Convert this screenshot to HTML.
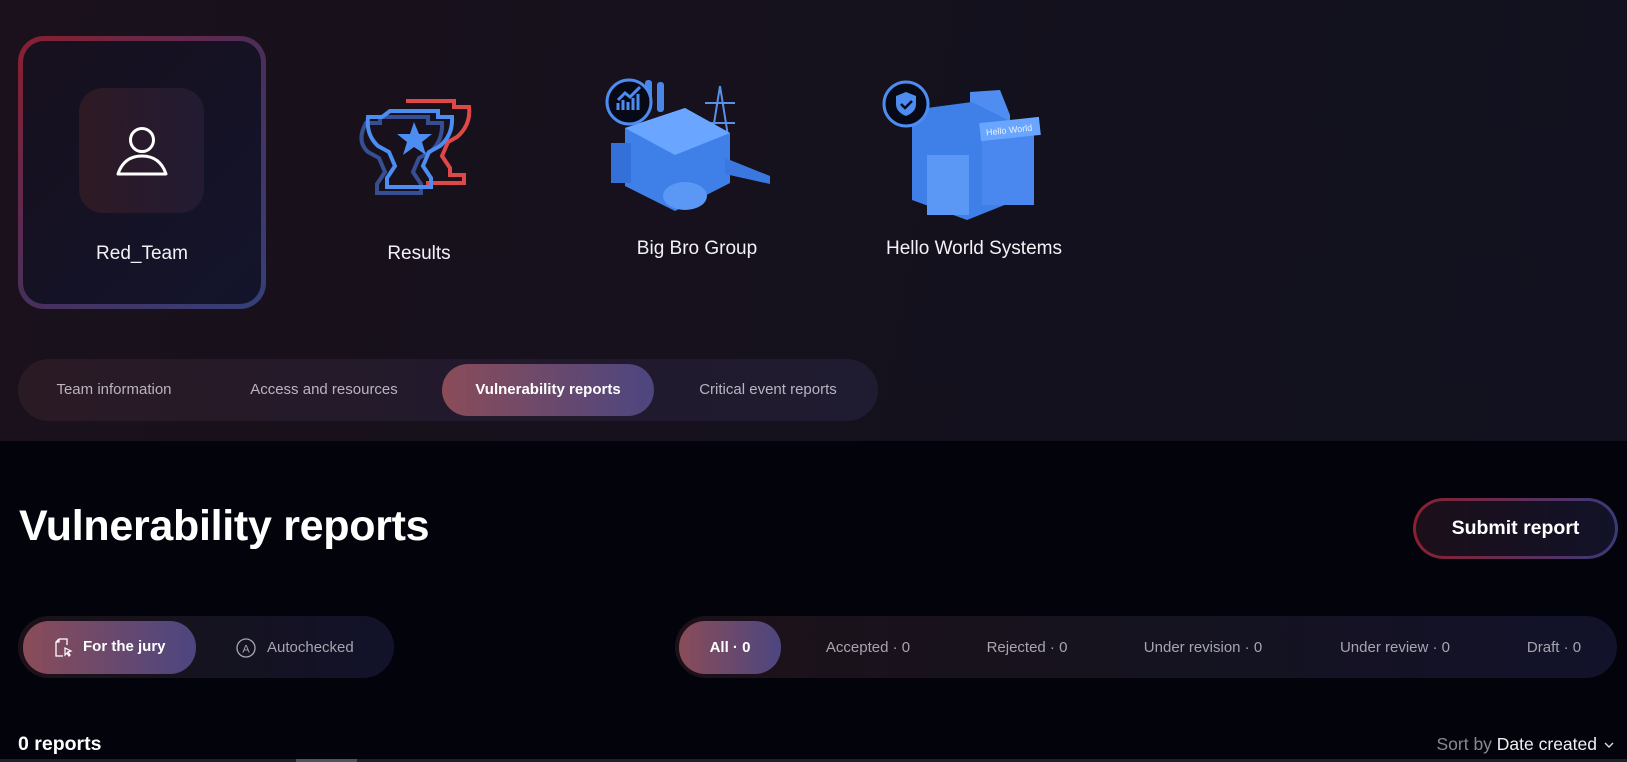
<!DOCTYPE html>
<html><head><meta charset="utf-8"><style>
*{margin:0;padding:0;box-sizing:border-box}
body{width:1627px;height:762px;overflow:hidden;background:#03030c;font-family:"Liberation Sans",sans-serif;color:#fff;position:relative}
.top{position:absolute;left:0;top:0;width:1627px;height:441px;background:linear-gradient(100deg,#1a111c 0%,#15111d 50%,#11111f 100%)}
.abs{position:absolute}
.c{position:absolute;transform:translateX(-50%);white-space:nowrap}
.card{left:18px;top:36px;width:248px;height:273px;border-radius:26px;padding:5px;background:linear-gradient(135deg,#8a2030,#4a2e5a 50%,#34407a)}
.card>div{width:100%;height:100%;border-radius:21px;background:linear-gradient(135deg,#17101d,#13142c)}
.ibox{left:79px;top:88px;width:125px;height:125px;border-radius:24px;background:linear-gradient(90deg,#2e1a24,#221b33)}
.lbl{font-size:19px;color:#f2f2f6}
.tabs{left:18px;top:359px;width:860px;height:62px;border-radius:31px;background:linear-gradient(90deg,#2a1a24,#221a2c 50%,#1f1b30)}
.tab{font-size:15px;color:#b9b4c0;top:381px}
.act{background:linear-gradient(90deg,#8a4c58,#4c4680);border-radius:26px}
h1{position:absolute;left:19px;top:502px;font-size:43px;font-weight:bold;letter-spacing:-0.3px}
.btn{left:1413px;top:498px;width:205px;height:61px;border-radius:31px;padding:3px;background:linear-gradient(90deg,#8a2030,#3a3a7a)}
.btn>div{width:100%;height:100%;border-radius:28px;background:linear-gradient(90deg,#1c0f1a,#121228);font-size:19.5px;font-weight:bold;text-align:center;line-height:55px}
.pill{height:62px;border-radius:31px;background:linear-gradient(90deg,#1d1119,#15131f 50%,#12122a)}
.ft{font-size:15px;color:#a8a4b0;top:639px}
</style></head><body>
<div class="top"></div>
<div class="abs card"><div></div></div>
<div class="abs ibox"></div>
<svg class="abs" style="left:116px;top:125px" width="52" height="52" viewBox="0 0 52 52"><circle cx="26" cy="15" r="11.5" fill="none" stroke="#fff" stroke-width="3"/><path d="M2 49 Q8 31 26 31 Q44 31 50 49 Z" fill="none" stroke="#fff" stroke-width="3" stroke-linejoin="round"/></svg>
<div class="c lbl" style="left:142px;top:243px">Red_Team</div>
<svg class="abs" style="left:358px;top:97px" width="118" height="100" viewBox="0 0 118 100">
<g fill="none" stroke-width="4" stroke-linejoin="miter">
<path d="M48 4h48v6h15q2 18-12 30l-9 5-6 14 8 12v7h14v8H68" stroke="#e04848"/>
<path d="M20 16h48v6h14q1 18-12 29l-11 6-6 14 8 12v9H17v-9l8-12-6-14-11-6Q-4 40 6 22h14z" stroke="#3c5aa8" opacity=".85" transform="translate(2 4)"/>
<path d="M28 14h48v6h14q1 18-12 29l-11 6-6 14 8 12v9H25v-9l8-12-6-14-11-6Q4 38 6 20h14z" stroke="#4d8cf0" transform="translate(4 0)"/>
</g>
<path d="M56 25l5 12 13 0-10 8 4 13-12-8-11 8 4-13-10-8 13 0z" fill="#4d8cf0"/>
</svg>
<div class="c lbl" style="left:419px;top:243px">Results</div>
<svg class="abs" style="left:605px;top:78px" width="170" height="140" viewBox="0 0 170 140">
<rect x="40" y="2" width="7" height="30" rx="3" fill="#4a86e8"/><rect x="52" y="4" width="7" height="30" rx="3" fill="#4a86e8"/>
<path d="M115 8l-8 50M115 8l8 50M100 25h30M100 45h30" stroke="#5a90e8" stroke-width="2"/>
<path d="M20 50l60-20 45 25v50l-55 28-50-25z" fill="#3f7fe8"/>
<path d="M20 50l60-20 45 25-55 22z" fill="#6aa6ff"/>
<path d="M120 80l45 18v8l-45-10z" fill="#3a78e0"/>
<rect x="6" y="65" width="20" height="40" fill="#3470d8"/>
<ellipse cx="80" cy="118" rx="22" ry="14" fill="#5b97f5"/>
<circle cx="24" cy="24" r="22" fill="#070a16" stroke="#4d8cf0" stroke-width="3"/>
<path d="M13 32v-7M18 32v-10M23 32v-8M28 32v-12M33 32v-16M13 22l7-7 5 4 10-10" stroke="#4d8cf0" stroke-width="3" fill="none"/>
</svg>
<div class="c lbl" style="left:697px;top:238px">Big Bro Group</div>
<svg class="abs" style="left:882px;top:80px" width="165" height="140" viewBox="0 0 165 140">
<path d="M88 12l30-2 10 25v40l-40 5z" fill="#4f8ef0"/>
<path d="M30 30l60-8 40 20v80l-45 18-55-20z" fill="#3f7fe8"/>
<rect x="45" y="75" width="42" height="60" fill="#5b97f5"/>
<rect x="100" y="55" width="52" height="70" fill="#4a88ef"/>
<rect x="98" y="40" width="60" height="18" fill="#6aa6ff" transform="rotate(-6 128 49)"/>
<text x="127" y="53" font-size="9" fill="#e8f0ff" text-anchor="middle" font-family="Liberation Sans" transform="rotate(-6 128 49)">Hello World</text>
<circle cx="24" cy="24" r="22" fill="#070a16" stroke="#4d8cf0" stroke-width="3"/>
<path d="M24 12l10 4v8q0 8-10 12q-10-4-10-12v-8z" fill="#4d8cf0"/>
<path d="M19 24l4 4 7-7" stroke="#070a16" stroke-width="2.5" fill="none"/>
</svg>
<div class="c lbl" style="left:974px;top:238px">Hello World Systems</div>

<div class="abs tabs"></div>
<div class="abs act" style="left:442px;top:364px;width:212px;height:52px"></div>
<div class="c tab" style="left:114px">Team information</div>
<div class="c tab" style="left:324px">Access and resources</div>
<div class="c tab" style="left:548px;color:#fff;font-weight:bold">Vulnerability reports</div>
<div class="c tab" style="left:768px">Critical event reports</div>

<h1>Vulnerability reports</h1>
<div class="abs btn"><div>Submit report</div></div>

<div class="abs pill" style="left:18px;top:616px;width:376px"></div>
<div class="abs act" style="left:23px;top:621px;width:173px;height:53px"></div>
<svg class="abs" style="left:55px;top:638px" width="18" height="20" viewBox="0 0 18 20"><path d="M4 1h8v6M4 1L1 4v14h7M1 4h3V1" fill="none" stroke="#fff" stroke-width="1.3"/><path d="M10 10l6 3-3 1 2 3-1 1-2-3-2 2z" fill="none" stroke="#fff" stroke-width="1.2"/></svg>
<div class="abs" style="left:83px;top:638px;font-size:15px;font-weight:bold">For the jury</div>
<svg class="abs" style="left:236px;top:638px" width="20" height="20" viewBox="0 0 20 20"><circle cx="10" cy="10" r="9" fill="none" stroke="#a8a4b0" stroke-width="1.3"/><text x="10" y="14.5" font-size="11" text-anchor="middle" fill="#a8a4b0" font-family="Liberation Sans">A</text></svg>
<div class="abs" style="left:267px;top:639px;font-size:15px;color:#a8a4b0">Autochecked</div>

<div class="abs pill" style="left:675px;top:616px;width:942px"></div>
<div class="abs act" style="left:679px;top:621px;width:102px;height:53px"></div>
<div class="c ft" style="left:730px;color:#fff;font-weight:bold">All · 0</div>
<div class="c ft" style="left:868px">Accepted · 0</div>
<div class="c ft" style="left:1027px">Rejected · 0</div>
<div class="c ft" style="left:1203px">Under revision · 0</div>
<div class="c ft" style="left:1395px">Under review · 0</div>
<div class="c ft" style="left:1554px">Draft · 0</div>

<div class="abs" style="left:18px;top:733px;font-size:19.5px;font-weight:bold">0 reports</div>
<div class="abs" style="right:30px;top:734px;font-size:17.5px;color:#8a8894">Sort by <span style="color:#f0f0f4">Date created</span></div>
<svg class="abs" style="left:1603px;top:741px" width="12" height="8" viewBox="0 0 12 8"><path d="M2 2l4 4 4-4" fill="none" stroke="#ddd" stroke-width="1.4"/></svg>
<div class="abs" style="left:0;top:759px;width:1627px;height:3px;background:#1b2228"></div>
<div class="abs" style="left:296px;top:759px;width:61px;height:3px;background:#4d545c"></div>
</body></html>
